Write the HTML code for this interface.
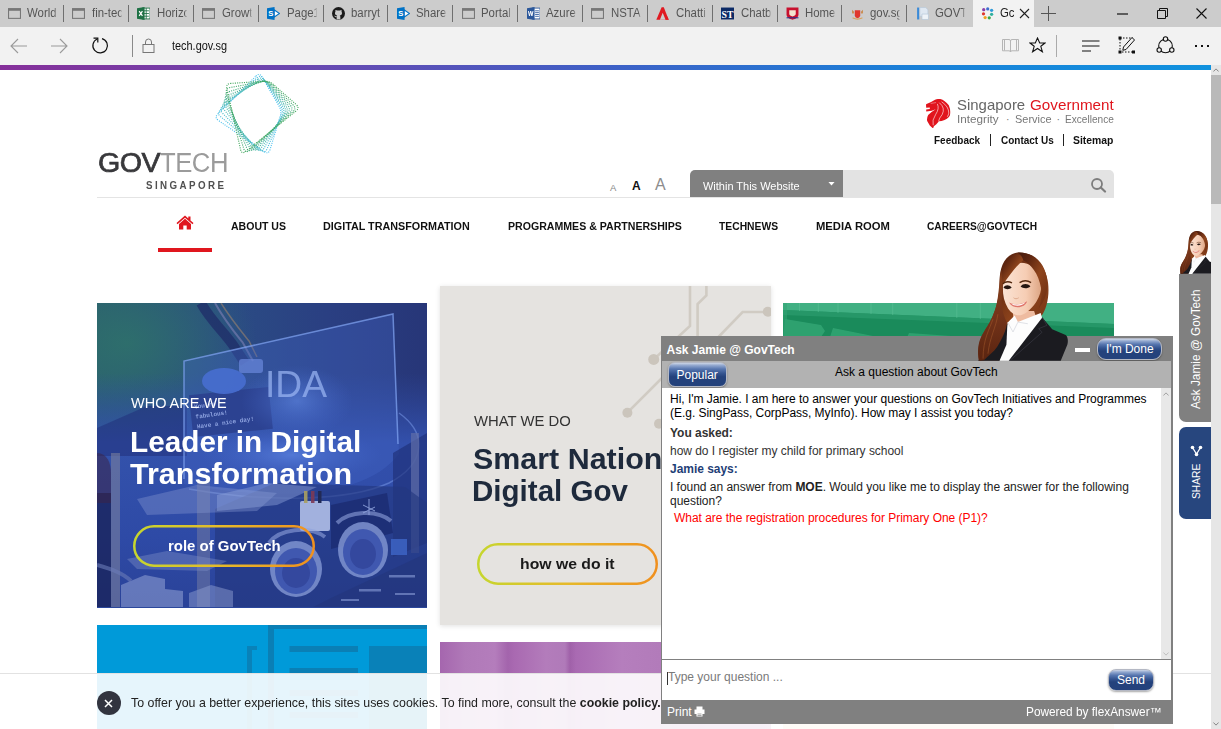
<!DOCTYPE html>
<html lang="en">
<head>
<meta charset="utf-8">
<title>GovTech Singapore</title>
<style>
*{box-sizing:border-box;margin:0;padding:0}
html,body{width:1221px;height:729px;overflow:hidden;background:#fff}
body{position:relative;font-family:"Liberation Sans",sans-serif;color:#000}
.a{position:absolute}
.t{position:absolute;white-space:nowrap;line-height:1;transform-origin:0 50%;transform:scaleX(var(--sx,1))}
.b{font-weight:bold}
/* browser chrome */
#tabbar{left:0;top:0;width:1221px;height:27px;background:#cccccc}
#toolbar{left:0;top:27px;width:1221px;height:37.600px;background:#f2f2f2}
#grad{left:0;top:64.600px;width:1211px;height:5px;background:linear-gradient(90deg,#86309a 0%,#6a48b0 25%,#3e60c6 50%,#1a80d8 75%,#1192de 100%)}
#vscroll{left:1211px;top:64.600px;width:10px;height:664.400px;background:#e6e6e6}
#vthumb{left:1211px;top:75.400px;width:10px;height:128.600px;background:#b9b9b9}
.tab{position:absolute;top:0;height:27px;width:65px}
.tab .sep{position:absolute;left:63px;top:5px;width:1px;height:17px;background:#6f6f6f}
.tab .ic{position:absolute;left:7.500px;top:6.500px;width:13px;height:13px}
.tab .tt{position:absolute;left:27px;top:6px;width:31.500px;transform:scaleX(.95);transform-origin:0 50%;overflow:hidden;white-space:nowrap;font-size:12px;line-height:14px;color:#555;-webkit-mask-image:linear-gradient(90deg,#000 90%,transparent 100%);mask-image:linear-gradient(90deg,#000 90%,transparent 100%)}
.pill{background:linear-gradient(180deg,#cdd6e6 0%,#93a9d0 10%,#5877b0 26%,#33538f 46%,#24427c 60%,#24427c 100%);border:1.5px solid #b4b8c4;box-shadow:0 1px 2px rgba(0,0,0,.35)}
.msg{font-size:12px;line-height:13.8px;white-space:nowrap;letter-spacing:-.03px}
</style>
</head>
<body>
<!-- BROWSER CHROME -->
<div class="a" id="tabbar"></div>
<div class="a" id="toolbar"></div>
<div class="a" id="grad"></div>
<div class="a" id="vscroll"></div>
<div class="a" id="vthumb"></div>
<svg class="a" style="left:1213px;top:68px" width="6" height="4" viewBox="0 0 8 5"><path d="M0.500 4.500 4 1l3.500 3.500" stroke="#666" fill="none"/></svg>
<svg class="a" style="left:1213px;top:722px" width="6" height="4" viewBox="0 0 8 5"><path d="M0.500 0.500 4 4l3.500-3.500" stroke="#666" fill="none"/></svg>
<!-- TABS -->
<div class="tab" style="left:0.0px"><svg class="ic" viewBox="0 0 12 12"><rect x="0.5" y="1.5" width="11" height="9" fill="none" stroke="#777" stroke-width="1"/><rect x="0.5" y="1.5" width="11" height="2" fill="#777"/></svg><span class="tt">World</span><i class="sep"></i></div>
<div class="tab" style="left:64.9px"><svg class="ic" viewBox="0 0 12 12"><rect x="0.5" y="1.5" width="11" height="9" fill="none" stroke="#777" stroke-width="1"/><rect x="0.5" y="1.5" width="11" height="2" fill="#777"/></svg><span class="tt">fin-tec</span><i class="sep"></i></div>
<div class="tab" style="left:129.7px"><svg class="ic" viewBox="0 0 12 12"><rect x="5" y="1" width="7" height="10" fill="#fff" stroke="#1e7145" stroke-width="0.8"/><path d="M6 3.5h5M6 6h5M6 8.5h5M8.5 1v10" stroke="#1e7145" stroke-width="0.8"/><path d="M0 1.2 7 0v12L0 10.8z" fill="#1e7145"/><path d="M2 3.8l3 4.4M5 3.8 2 8.2" stroke="#fff" stroke-width="1.1"/></svg><span class="tt">Horizc</span><i class="sep"></i></div>
<div class="tab" style="left:194.6px"><svg class="ic" viewBox="0 0 12 12"><rect x="0.5" y="1.5" width="11" height="9" fill="none" stroke="#777" stroke-width="1"/><rect x="0.5" y="1.5" width="11" height="2" fill="#777"/></svg><span class="tt">Growt</span><i class="sep"></i></div>
<div class="tab" style="left:259.5px"><svg class="ic" viewBox="0 0 12 12"><path d="M6.5 2.5 11.5 6 6.5 9.5z" fill="#fff" stroke="#0072c6" stroke-width="1"/><path d="M0 1.2 7 0v12L0 10.8z" fill="#0072c6"/><text x="3.4" y="8.6" font-family="Liberation Sans,sans-serif" font-size="7" font-weight="bold" fill="#fff" text-anchor="middle">S</text></svg><span class="tt">Page1</span><i class="sep"></i></div>
<div class="tab" style="left:324.4px"><svg class="ic" viewBox="0 0 12 12"><circle cx="6" cy="6" r="6" fill="#1b1b1b"/><path d="M4.3 11.6V9.3C2.6 9.6 2.4 8.4 1.9 8.1 3 8 3 9 4.3 8.7 4.4 8.2 4.6 8 4.9 7.8 2.6 7.5 2.4 5.2 3.2 4.3 3 3.8 3 3.2 3.3 2.7c.6 0 1.1.3 1.5.6.8-.2 1.6-.2 2.4 0 .4-.3.9-.6 1.5-.6.3.5.3 1.100.1 1.600.8.9.6 3.200-1.700 3.500.4.300.6.700.6 1.400v2.400z" fill="#ccc"/></svg><span class="tt">barryt</span><i class="sep"></i></div>
<div class="tab" style="left:389.2px"><svg class="ic" viewBox="0 0 12 12"><path d="M6.5 2.5 11.5 6 6.5 9.5z" fill="#fff" stroke="#0072c6" stroke-width="1"/><path d="M0 1.2 7 0v12L0 10.8z" fill="#0072c6"/><text x="3.4" y="8.6" font-family="Liberation Sans,sans-serif" font-size="7" font-weight="bold" fill="#fff" text-anchor="middle">S</text></svg><span class="tt">Sharel</span><i class="sep"></i></div>
<div class="tab" style="left:454.1px"><svg class="ic" viewBox="0 0 12 12"><rect x="0.5" y="1.5" width="11" height="9" fill="none" stroke="#777" stroke-width="1"/><rect x="0.5" y="1.5" width="11" height="2" fill="#777"/></svg><span class="tt">Portal</span><i class="sep"></i></div>
<div class="tab" style="left:519.0px"><svg class="ic" viewBox="0 0 12 12"><rect x="5" y="1" width="7" height="10" fill="#fff" stroke="#2b579a" stroke-width="0.8"/><path d="M7.500 3.500h3.500M7.500 5.200h3.500M7.500 6.900h3.500M7.500 8.600h3.500" stroke="#2b579a" stroke-width="0.8"/><path d="M0 1.2 7 0v12L0 10.8z" fill="#2b579a"/><path d="M1.300 3.800l1 4.400 1.100-4.400 1.100 4.400 1-4.400" stroke="#fff" stroke-width="0.9" fill="none"/></svg><span class="tt">Azure</span><i class="sep"></i></div>
<div class="tab" style="left:583.8px"><svg class="ic" viewBox="0 0 12 12"><rect x="0.5" y="1.5" width="11" height="9" fill="none" stroke="#777" stroke-width="1"/><rect x="0.5" y="1.5" width="11" height="2" fill="#777"/></svg><span class="tt">NSTAC</span><i class="sep"></i></div>
<div class="tab" style="left:648.7px"><svg class="ic" viewBox="0 0 12 12"><path d="M0.300 11.700 5.200 0.300h2L11.700 11.700z" fill="#e01a22"/><path d="M3.600 11.700 6.200 5.200 8.800 11.700z" fill="#ccc"/><path d="M8.800 11.700h3L10 8z" fill="#e01a22"/></svg><span class="tt">Chatti</span><i class="sep"></i></div>
<div class="tab" style="left:713.6px"><svg class="ic" viewBox="0 0 12 12"><rect x="0" y="0.500" width="12" height="11" fill="#0c2a66"/><text x="6" y="10" font-family="Liberation Serif,serif" font-size="10" font-weight="bold" fill="#fff" text-anchor="middle" textLength="11" lengthAdjust="spacingAndGlyphs">ST</text></svg><span class="tt">Chatb</span><i class="sep"></i></div>
<div class="tab" style="left:778.4px"><svg class="ic" viewBox="0 0 12 12"><path d="M0.500 0.500h11v6.500c0 2.500-2.500 4.200-5.500 4.700C3 11.200 0.500 9.500 0.500 7z" fill="#c8102e"/><path d="M3 3h6v3.500c0 1-1.500 2-3 2.300C4.500 8.500 3 7.500 3 6.500z" fill="#f3e3d0"/><rect x="0.500" y="9.300" width="11" height="1.200" fill="#26328c" opacity=".8"/></svg><span class="tt">Home</span><i class="sep"></i></div>
<div class="tab" style="left:843.3px"><svg class="ic" viewBox="0 0 12 12"><path d="M1 2.500 3 4.500 2 6.500 1 5.500zM11 2.500 9 4.500 10 6.500 11 5.500z" fill="#c98a4a"/><path d="M3.500 3h5v4.500c0 1.500-1 2.300-2.500 2.800C4.500 9.800 3.500 9 3.500 7.500z" fill="#e0372c"/><path d="M1.500 9.500c3 1.500 6 1.500 9 0v1.200c-3 1.300-6 1.300-9 0z" fill="#d9a05a"/></svg><span class="tt">gov.sg</span><i class="sep"></i></div>
<div class="tab" style="left:908.2px"><svg class="ic" viewBox="0 0 12 12"><path d="M1 0.500h2v11H1z" fill="#3a8ad8"/><path d="M3.500 0.500h5.500l2 2v6h-7.500z" fill="#dfe8f2" stroke="#b5c6d8" stroke-width="0.600"/><path d="M5.500 6.500h6v5h-6z" fill="#eef3f8" stroke="#b5c6d8" stroke-width="0.600"/></svg><span class="tt">GOVT</span></div>
<div class="tab" id="acttab" style="left:973px;width:61px;background:#f2f2f2"><svg class="ic" viewBox="0 0 12 12"><circle cx="2.500" cy="2.500" r="1.500" fill="#8a3fa8"/><circle cx="6.200" cy="1.800" r="1.500" fill="#3f6fd0"/><circle cx="9.800" cy="3" r="1.500" fill="#2f9ad8"/><circle cx="2.300" cy="6.300" r="1.500" fill="#e0362c"/><circle cx="3.800" cy="9.800" r="1.500" fill="#f0a020"/><circle cx="7.600" cy="10" r="1.500" fill="#3aa648"/><circle cx="9.800" cy="6.800" r="1.500" fill="#2fb0a0"/></svg><span class="tt" style="width:16px;color:#222">Gc</span><svg class="a" style="left:46px;top:8px" width="11" height="11" viewBox="0 0 11 11"><path d="M1 1l9 9M10 1l-9 9" stroke="#222" stroke-width="1.100" fill="none"/></svg></div>
<!-- plus / window controls -->
<svg class="a" style="left:1041px;top:6px" width="15" height="15" viewBox="0 0 15 15"><path d="M7.500 0v15M0 7.500h15" stroke="#555" stroke-width="1" fill="none"/></svg>
<svg class="a" style="left:1117px;top:13px" width="11" height="2" viewBox="0 0 11 2"><path d="M0 1h11" stroke="#111" stroke-width="1.200"/></svg>
<svg class="a" style="left:1157px;top:8px" width="11" height="11" viewBox="0 0 11 11"><path d="M0.500 2.500h8v8h-8zM2.500 2.500v-2h8v8h-2" stroke="#111" stroke-width="1" fill="none"/></svg>
<svg class="a" style="left:1196px;top:8px" width="11" height="11" viewBox="0 0 11 11"><path d="M0.500 0.500l10 10M10.500 0.500l-10 10" stroke="#111" stroke-width="1.100" fill="none"/></svg>
<!-- toolbar -->
<svg class="a" style="left:10px;top:38px" width="18" height="16" viewBox="0 0 18 16"><path d="M17 8H1.500M8 1 1 8l7 7" stroke="#9a9a9a" stroke-width="1.100" fill="none"/></svg>
<svg class="a" style="left:50px;top:38px" width="18" height="16" viewBox="0 0 18 16"><path d="M1 8h15.500M10 1l7 7-7 7" stroke="#9a9a9a" stroke-width="1.100" fill="none"/></svg>
<svg class="a" style="left:91px;top:36px" width="18" height="18" viewBox="0 0 18 18"><path d="M6.200 3A7.300 7.300 0 1 0 11 2.600" stroke="#111" stroke-width="1.200" fill="none"/><path d="M2.500 2.200h4.300v4.300" stroke="#111" stroke-width="1.200" fill="none"/></svg>
<div class="a" style="left:132px;top:35px;width:1px;height:22px;background:#8a8a8a"></div>
<svg class="a" style="left:142px;top:38px" width="13" height="15" viewBox="0 0 13 15"><rect x="1" y="6.500" width="11" height="8" fill="none" stroke="#777" stroke-width="1"/><path d="M3.500 6.500V4a3 3 0 0 1 6 0v2.500" fill="none" stroke="#777" stroke-width="1"/></svg>
<span class="t" id="url" style="left:172px;top:40px;font-size:12px;color:#111;--sx:0.909">tech.gov.sg</span>
<svg class="a" style="left:1002px;top:38px" width="17" height="15" viewBox="0 0 17 15"><path d="M0.500 1.500h6.500q1.500 0 1.500 1.500v11q0-1.200-1.500-1.200H0.500zM16.500 1.500h-6.500q-1.500 0-1.500 1.500v11q0-1.200 1.500-1.200h6.500z" stroke="#b5b5b5" stroke-width="1" fill="none"/><path d="M2.500 1.500v11M14.500 1.500v11" stroke="#b5b5b5" stroke-width="1"/></svg>
<svg class="a" style="left:1029px;top:37px" width="17" height="16" viewBox="0 0 17 16"><path d="M8.500 1 10.700 6h5.300L11.800 9.300l1.600 5.500L8.500 11.500 3.600 14.800l1.600-5.500L1 6h5.300z" stroke="#111" stroke-width="1.100" fill="none" stroke-linejoin="miter"/></svg>
<div class="a" style="left:1056px;top:35px;width:1px;height:22px;background:#aaa"></div>
<svg class="a" style="left:1082px;top:40px" width="18" height="12" viewBox="0 0 18 12"><path d="M0 1h17.500M0 6h17.500M0 11h9" stroke="#111" stroke-width="1.100"/></svg>
<svg class="a" style="left:1118px;top:36px" width="18" height="18" viewBox="0 0 18 18"><path d="M2 3v13h13" stroke="#111" stroke-width="1" fill="none" stroke-dasharray="1.500 1.500"/><path d="M2 2h13" stroke="#111" stroke-width="1" stroke-dasharray="1.500 1.500"/><rect x="0.500" y="0.500" width="3" height="3" fill="#111"/><rect x="0.500" y="14.500" width="3" height="3" fill="#111"/><rect x="14" y="14.500" width="3" height="3" fill="#111"/><path d="M14 1.500l2.500 2.500-8.500 9.500-3.200.8.700-3.300z" fill="#f2f2f2" stroke="#111" stroke-width="1"/></svg>
<svg class="a" style="left:1156px;top:36px" width="19" height="18" viewBox="0 0 19 18"><circle cx="9.500" cy="10" r="6.800" fill="none" stroke="#111" stroke-width="1.100"/><circle cx="9.500" cy="3" r="2.200" fill="#f2f2f2" stroke="#111" stroke-width="1.100"/><circle cx="3.200" cy="14" r="2.200" fill="#f2f2f2" stroke="#111" stroke-width="1.100"/><circle cx="15.800" cy="14" r="2.200" fill="#f2f2f2" stroke="#111" stroke-width="1.100"/></svg>
<div class="a" style="left:1195px;top:45px;width:2px;height:2px;background:#111;box-shadow:6px 0 #111,12px 0 #111"></div>
<!-- PAGE -->
<!-- HEADER -->
<span class="t" id="lg1" style="left:97.500px;top:149.500px;font-size:27px;color:#38383b;letter-spacing:-.5px;-webkit-text-stroke:.7px #38383b;--sx:1.06">GOV</span>
<span class="t" id="lg2" style="left:160px;top:149.500px;font-size:27px;color:#9b9b9b;letter-spacing:-.5px;--sx:0.951">TECH</span>
<span class="t" id="lg3" style="left:146px;top:181px;font-size:10px;font-weight:bold;color:#505050;letter-spacing:2.500px;--sx:0.976">SINGAPORE</span>
<svg class="a" id="swirl" style="left:212px;top:68px" width="90" height="90" viewBox="-43.500 -43.500 87 87"><g fill="none" stroke-width="1.100" stroke-dasharray="1 1.200" stroke-linejoin="round"><path d="M-1.1 -35.6Q2.5 -39.1 5.0 -34.8L21.5 -6.3Q24.0 -2.0 22.5 2.8L12.6 35.4Q11.1 40.2 7.0 37.4L-37.3 7.2Q-41.4 4.4 -37.8 0.9z" stroke="rgb(80, 195, 238)"/><path d="M-0.2 -33.9Q3.6 -37.2 6.3 -33.0L22.9 -6.5Q25.6 -2.3 23.6 2.3L9.7 34.7Q7.7 39.3 3.8 36.1L-35.2 3.5Q-39.1 0.3 -35.3 -3.0z" stroke="rgb(78, 191, 220)"/><path d="M0.7 -32.5Q4.7 -35.5 7.5 -31.4L24.3 -6.7Q27.2 -2.6 24.8 1.8L6.8 34.1Q4.4 38.5 0.9 34.9L-33.5 -0.0Q-37.0 -3.6 -33.0 -6.7z" stroke="rgb(76, 188, 201)"/><path d="M1.5 -31.3Q5.7 -34.1 8.7 -30.0L25.9 -6.9Q28.9 -2.9 26.1 1.2L4.1 33.8Q1.3 38.0 -1.8 34.1L-32.0 -3.5Q-35.1 -7.4 -30.9 -10.2z" stroke="rgb(73, 184, 182)"/><path d="M2.4 -30.6Q6.8 -32.9 10.0 -29.1L27.6 -7.1Q30.8 -3.2 27.7 0.7L1.4 33.9Q-1.7 37.8 -4.5 33.6L-30.9 -7.0Q-33.7 -11.2 -29.2 -13.6z" stroke="rgb(71, 180, 164)"/><path d="M3.4 -30.2Q8.0 -32.2 11.3 -28.4L29.7 -7.4Q33.0 -3.6 29.6 0.1L-1.4 34.3Q-4.8 38.0 -7.1 33.5L-30.2 -10.7Q-32.5 -15.1 -27.9 -17.1z" stroke="rgb(69, 176, 146)"/><path d="M4.4 -30.2Q9.2 -31.6 12.7 -28.0L32.1 -7.6Q35.5 -4.0 32.0 -0.5L-4.4 35.0Q-8.0 38.5 -9.9 33.9L-29.7 -14.6Q-31.6 -19.3 -26.8 -20.7z" stroke="rgb(66, 172, 127)"/><path d="M5.6 -30.4Q10.6 -31.3 14.2 -27.8L34.8 -7.9Q38.4 -4.4 34.7 -1.1L-7.5 36.0Q-11.3 39.3 -12.8 34.5L-29.4 -18.9Q-30.9 -23.7 -26.0 -24.6z" stroke="rgb(64, 169, 108)"/><path d="M7.0 -30.7Q12.0 -31.0 15.7 -27.7L37.8 -8.2Q41.5 -4.9 37.6 -1.8L-10.9 37.1Q-14.8 40.2 -15.9 35.3L-29.1 -23.4Q-30.2 -28.3 -25.2 -28.6z" stroke="rgb(62, 165, 90)"/></g></svg>
<svg class="a" id="lion" style="left:926px;top:98.900px" width="24.900" height="29.500" viewBox="92 105 380 450"><path d="M100 180 170 150 230 115Q270 100 310 106 380 125 440 200 475 280 455 360 430 410 330 440L290 446 250 490 212 520 200 555 150 510 110 440Q100 400 125 350 160 310 240 262L180 285 95 295 95 265 150 256 150 236 95 240 92 190z" fill="#e1141d"/><g stroke="#fff" stroke-width="9" fill="none" stroke-linecap="round"><path d="M268 185Q300 250 240 340 180 430 200 500"/><path d="M300 165Q390 240 340 340 290 400 285 440"/><path d="M335 150Q440 220 440 320 435 350 420 372"/><path d="M170 172 240 160" stroke-width="6"/></g></svg>
<span class="t" id="sg1" style="left:957px;top:98px;font-size:14.300px;color:#666;--sx:1.046">Singapore</span>
<span class="t" id="sg2" style="left:1030px;top:98px;font-size:14.300px;color:#e0161e;--sx:1.065">Government</span>
<span class="t" id="sg3a" style="left:957px;top:114px;font-size:10.500px;color:#777;--sx:1.114">Integrity</span><span class="t" id="sg3b" style="left:1006px;top:114px;font-size:10.500px;color:#777">·</span><span class="t" id="sg3c" style="left:1014.600px;top:114px;font-size:10.500px;color:#777;--sx:1.042">Service</span><span class="t" id="sg3d" style="left:1056.400px;top:114px;font-size:10.500px;color:#777">·</span><span class="t" id="sg3e" style="left:1065.300px;top:114px;font-size:10.500px;color:#777;--sx:0.961">Excellence</span>
<span class="t b" id="fb1" style="left:934px;top:135px;font-size:11px;color:#111;--sx:0.908">Feedback</span>
<div class="a" style="left:990px;top:134px;width:1px;height:12px;background:#222"></div>
<span class="t b" id="fb2" style="left:1001px;top:135px;font-size:11px;color:#111;--sx:0.908">Contact Us</span>
<div class="a" style="left:1063px;top:134px;width:1px;height:12px;background:#222"></div>
<span class="t b" id="fb3" style="left:1073px;top:135px;font-size:11px;color:#111;--sx:0.946">Sitemap</span>
<span class="t" id="fa1" style="left:610px;top:182.500px;font-size:9.500px;color:#858585">A</span>
<span class="t b" id="fa2" style="left:632px;top:180px;font-size:12px;color:#111">A</span>
<span class="t" id="fa3" style="left:655px;top:177px;font-size:16px;color:#8c8c8c">A</span>
<div class="a" style="left:690px;top:169.800px;width:153px;height:28px;background:#808080;border-radius:5px 0 0 0"></div>
<div class="a" style="left:843px;top:169.800px;width:271px;height:28px;background:#e3e3e3;border-radius:0 5px 0 0"></div>
<span class="t" id="wtw" style="left:703px;top:181.300px;font-size:11px;color:#fff;--sx:0.998">Within This Website</span>
<svg class="a" style="left:827.700px;top:182px" width="7" height="3.800" viewBox="0 0 8 5"><path d="M0 0h8L4 4.500z" fill="#fff"/></svg>
<svg class="a" style="left:1090px;top:177px" width="17" height="16" viewBox="0 0 17 16"><circle cx="7" cy="7" r="5" fill="none" stroke="#7d7d7d" stroke-width="1.800"/><path d="M10.800 10.500 15 14.500" stroke="#7d7d7d" stroke-width="2.200" stroke-linecap="round"/></svg>
<div class="a" style="left:97px;top:197.300px;width:1017px;height:1px;background:#e4e4e4"></div>
<!-- NAV -->
<svg class="a" style="left:176px;top:215px" width="18" height="15" viewBox="0 0 18 15"><path d="M9 0.500 0.500 8l1 1.200L9 2.800l7.500 6.400 1-1.200-3-2.600V1.500h-2.200v2z" fill="#e0161e"/><path d="M9 3.800 3 9v5.500h4.300V10.500h3.400v4H15V9z" fill="#e0161e"/></svg>
<div class="a" style="left:158px;top:247.500px;width:54px;height:4.500px;background:#e0161e"></div>
<span class="t b" id="n1" style="left:231px;top:220px;font-size:11.600px;color:#111;--sx:0.908">ABOUT US</span>
<span class="t b" id="n2" style="left:323.400px;top:220px;font-size:11.600px;color:#111;--sx:0.93">DIGITAL TRANSFORMATION</span>
<span class="t b" id="n3" style="left:508.300px;top:220px;font-size:11.600px;color:#111;--sx:0.913">PROGRAMMES &amp; PARTNERSHIPS</span>
<span class="t b" id="n4" style="left:719.400px;top:220px;font-size:11.600px;color:#111;--sx:0.891">TECHNEWS</span>
<span class="t b" id="n5" style="left:816.100px;top:220px;font-size:11.600px;color:#111;--sx:0.97">MEDIA ROOM</span>
<span class="t b" id="n6" style="left:927.200px;top:220px;font-size:11.600px;color:#111;--sx:0.878">CAREERS@GOVTECH</span>
<!-- CARD 1 -->
<div class="a" id="card1" style="left:97px;top:303px;width:330.200px;height:304.600px;overflow:hidden;background:#2b479c">
<svg class="a" id="c1bg" style="left:0;top:0;filter:blur(.6px)" width="330" height="304" viewBox="0 0 330 304">
<defs>
<linearGradient id="c1a" x1="0" y1="0" x2="1" y2="0"><stop offset="0" stop-color="#2b5a72"/><stop offset=".4" stop-color="#2b4c84"/><stop offset=".7" stop-color="#2a3f82"/><stop offset="1" stop-color="#273678"/></linearGradient>
<linearGradient id="c1b" x1="0" y1="0" x2="0" y2="1"><stop offset="0" stop-color="#2f4ca6" stop-opacity="0"/><stop offset=".3" stop-color="#3452b0" stop-opacity=".92"/><stop offset=".7" stop-color="#2e4aa6"/><stop offset="1" stop-color="#2a4298"/></linearGradient>
<radialGradient id="c1c" cx=".5" cy=".5" r=".5"><stop offset="0" stop-color="#6a94f0" stop-opacity=".9"/><stop offset="1" stop-color="#4a70d8" stop-opacity="0"/></radialGradient>
<radialGradient id="c1g" cx=".5" cy=".5" r=".5"><stop offset="0" stop-color="#2f7868" stop-opacity=".7"/><stop offset="1" stop-color="#2f7868" stop-opacity="0"/></radialGradient>
</defs>
<rect width="330" height="304" fill="url(#c1a)"/>
<ellipse cx="30" cy="40" rx="130" ry="100" fill="url(#c1g)"/>
<rect y="70" width="330" height="234" fill="url(#c1b)"/>
<path d="M104 0c10 18 24 30 32 42l12 18" stroke="#1f2c68" stroke-width="10" fill="none" opacity=".75"/>
<path d="M118 0c10 18 20 30 28 40l10 18" stroke="#6a74a8" stroke-width="2" fill="none" opacity=".8"/>
<path d="M124 0c10 16 20 28 28 38l8 16" stroke="#8a7a70" stroke-width="1.500" fill="none" opacity=".7"/>
<path d="M0 125l50-22h40v50H0z" fill="#20307a" opacity=".55"/>
<rect x="94" y="88" width="80" height="42" fill="#1e2c70" opacity=".85" transform="rotate(-6 134 110)"/>
<ellipse cx="127" cy="78" rx="22" ry="13" fill="#4a72d6" opacity=".9"/>
<rect x="142" y="56" width="24" height="14" rx="3" fill="#7f9ae8" opacity=".7"/>
<path d="M87 58 296 11l6 140c-30 40-110 50-215 30z" fill="#4466c6" opacity=".34"/>
<path d="M87 176V58L296 11l5 130" stroke="#7ea0ee" stroke-width="1.500" fill="none" opacity=".75"/>
<path d="M302 110c28 20 28 50-10 70-40 18-120 20-200 6" stroke="#6f90e0" stroke-width="1.500" fill="none" opacity=".6"/>
<ellipse cx="200" cy="98" rx="56" ry="36" fill="url(#c1c)" opacity=".55"/>
<ellipse cx="195" cy="152" rx="90" ry="26" fill="url(#c1c)" opacity=".6"/>
<text x="168" y="94" font-family="Liberation Sans,sans-serif" font-size="36" fill="#9db8f5" opacity=".7" textLength="62" lengthAdjust="spacingAndGlyphs">IDA</text>
<g font-family="Liberation Mono,monospace" font-size="6" font-weight="bold" fill="#9fb4ee" opacity=".85" transform="rotate(-8 96 110)"><text x="98" y="106">You're</text><text x="98" y="116">fabulous!</text><text x="98" y="126">Have a nice day!</text></g>
<path d="M296 150l34-20v110l-34 14z" fill="#1f2f78" opacity=".65"/>
<rect x="14" y="150" width="9" height="154" fill="#7a7f9c" opacity=".6"/>
<rect x="100" y="178" width="13" height="126" fill="#6a74a2" opacity=".6"/>
<rect x="314" y="130" width="8" height="120" fill="#5f6ea8" opacity=".7"/>
<path d="M0 190h14v114H0z" fill="#1a245c" opacity=".8"/>
<path d="M0 150c10 0 14 10 14 20v30H0z" fill="#3a2448" opacity=".55"/>
<path d="M118 206l60-26 130 4 22 16v104H118z" fill="#243880" opacity=".65"/>
<path d="M40 196l60-14 80 8-20 18-110 4z" fill="#8497d0" opacity=".4"/>
<path d="M120 192l50-12 50 4-40 18-60 6z" fill="#8fa2da" opacity=".45"/>
<rect x="203" y="198" width="30" height="30" rx="2" fill="#b9c6ec" opacity=".85"/>
<rect x="207" y="188" width="3.500" height="12" fill="#a9a060" opacity=".9"/><rect x="214" y="188" width="3.500" height="12" fill="#7d3a55" opacity=".9"/><rect x="221" y="188" width="3.500" height="12" fill="#222a55"/>
<path d="M234 202l56-12 6 40-62 16z" fill="#1d2d74" opacity=".9"/>
<path d="M272 196v16M266 202l12 6M266 210l12-6" stroke="#9fb2ea" stroke-width="1" opacity=".8"/>
<ellipse cx="199" cy="266" rx="26" ry="28" fill="#7f93d0" opacity=".85"/><ellipse cx="199" cy="268" rx="21" ry="23" fill="#4058b0"/><ellipse cx="199" cy="270" rx="14" ry="15" fill="#34489e"/>
<ellipse cx="266" cy="247" rx="25" ry="28" fill="#7f93d0" opacity=".85"/><ellipse cx="266" cy="249" rx="20" ry="23" fill="#4058b0"/><ellipse cx="266" cy="251" rx="13" ry="15" fill="#34489e"/>
<path d="M172 240c10-14 40-18 56-6" stroke="#8fa2dc" stroke-width="4" fill="none" opacity=".6"/>
<path d="M240 220c12-12 40-14 54-2" stroke="#8fa2dc" stroke-width="4" fill="none" opacity=".6"/>
<path d="M24 282l24-10 20 4v10l18 2v16H24z" fill="#8b9bd0" opacity=".6"/><path d="M92 290l22-8 22 6v16H92z" fill="#8b9bd0" opacity=".5"/><path d="M30 256l40-8 60 10-20 10-70-2z" fill="#7f90c8" opacity=".4"/>
<path d="M0 262c14 4 26 8 34 16" stroke="#6a7cb8" stroke-width="4" fill="none" opacity=".6"/>
<path d="M232 296l98-46v54H216z" fill="#24367e" opacity=".7"/>
<g fill="#9fb2ea" opacity=".5"><rect x="262" y="286" width="22" height="2.500"/><rect x="292" y="272" width="26" height="2.500"/><rect x="298" y="290" width="20" height="2"/><rect x="244" y="296" width="18" height="2"/></g>
<rect x="294" y="236" width="16" height="16" fill="#3f66c8" opacity=".8"/>
</svg>
<span class="t" id="c1t1" style="left:34px;top:93px;font-size:14.3px;color:#fff;--sx:1.013">WHO ARE WE</span>
<span class="t b" id="c1t2" style="left:32.5px;top:124.5px;font-size:29px;color:#fff;--sx:1.025">Leader in Digital</span>
<span class="t b" id="c1t3" style="left:33px;top:156.5px;font-size:29px;color:#fff;--sx:1.052">Transformation</span>
<div class="a btn" style="left:36px;top:222px;width:182px;height:42px"><svg class="a" style="left:0;top:0" width="182" height="42" viewBox="0 0 182 42"><defs><linearGradient id="bg1" x1="0" y1="0" x2="1" y2="0"><stop offset="0" stop-color="#c6d62e"/><stop offset=".5" stop-color="#e6b92a"/><stop offset="1" stop-color="#f0901e"/></linearGradient></defs><rect x="1.250" y="1.250" width="179.5" height="39.500" rx="19.750" fill="none" stroke="url(#bg1)" stroke-width="2.500"/></svg><span class="t b" id="c1t4" style="left:35px;top:14px;font-size:14.5px;color:#fff;--sx:1.031">role of GovTech</span></div>
</div>
<!-- CARD 2 -->
<div class="a" id="card2" style="left:440.200px;top:286px;width:330.600px;height:338.800px;overflow:hidden;background:#e5e3e0;box-shadow:0 1px 5px rgba(0,0,0,.12)">
<svg class="a" style="left:0;top:0" width="331" height="338" viewBox="0 0 331 338"><g stroke="#d0cbc3" stroke-width="2.600" fill="none"><path d="M250 0V40L213.700 73.400"/><path d="M266.400 0V9.400L257.600 18V60"/><path d="M328 26H302.600L260 70"/><path d="M187.400 126.700 240 74"/></g><g fill="#cbc5bc"><circle cx="327.800" cy="25.800" r="5"/><circle cx="213.700" cy="73.400" r="5.500"/><circle cx="187.400" cy="126.700" r="5"/><circle cx="219" cy="137.700" r="5"/></g></svg>
<span class="t" id="c2t1" style="left:34px;top:128px;font-size:14.3px;color:#333;--sx:1.039">WHAT WE DO</span>
<span class="t b" id="c2t2" style="left:33px;top:159px;font-size:29px;color:#1e2a3c;--sx:1.049">Smart Nation &amp;</span>
<span class="t b" id="c2t3" style="left:32px;top:191px;font-size:29px;color:#1e2a3c;--sx:1.019">Digital Gov</span>
<div class="a btn" style="left:37px;top:257px;width:181px;height:42px"><svg class="a" style="left:0;top:0" width="181" height="42" viewBox="0 0 181 42"><defs><linearGradient id="bg2" x1="0" y1="0" x2="1" y2="0"><stop offset="0" stop-color="#c6d62e"/><stop offset=".5" stop-color="#e6b92a"/><stop offset="1" stop-color="#f0901e"/></linearGradient></defs><rect x="1.250" y="1.250" width="178.5" height="39.500" rx="19.750" fill="none" stroke="url(#bg2)" stroke-width="2.500"/></svg><span class="t b" id="c2t4" style="left:43px;top:14px;font-size:14.5px;color:#1a1a1a;--sx:1.087">how we do it</span></div>
</div>
<!-- CARD 3 -->
<div class="a" id="card3" style="left:783px;top:303px;width:331px;height:304px;overflow:hidden;background:#1a8b5b">
<svg class="a" style="left:0;top:0;filter:blur(.5px)" width="331" height="60" viewBox="0 0 331 60"><path d="M0 0h331v21L0 7z" fill="#41b083"/><path d="M0 7l331 14v4L0 12z" fill="#2c9c6d" opacity=".7"/><g stroke="#5cc096" stroke-width="1" opacity=".55"><path d="M16.500 0v8M35.300 0v9M55 0v10M88 0v11M109.700 0v12M173.800 0v15M197.300 0v16M243 0v18"/></g><g fill="#33a574" opacity=".85"><path d="M2 16l36 6 4 6-8 12H0z"/><path d="M50 25l40 8 6 10H44z"/><path d="M126 30l56 4 14 10H120z"/><path d="M0 0h4v60H0z" opacity=".6"/></g></svg>
</div>
<!-- BOTTOM CARDS -->
<div class="a" id="card4" style="left:97px;top:625.400px;width:330.300px;height:104px;overflow:hidden;background:#009ad9">
<svg class="a" style="left:0;top:0" width="331" height="104" viewBox="0 0 331 104"><g fill="#0a7fb5"><path d="M171 0h160v4H171z"/><path d="M171 0h6v104h-6z"/><path d="M150 21h10v4h-5v79h-5z" opacity=".9"/><path d="M192.500 21H261v6h-68.500zM192.500 43H261v6h-68.500zM192.500 65H261v6h-68.500zM192.500 87H261v6h-68.500z"/><path d="M272 21h59v83h-59z" opacity=".92"/></g></svg>
</div>
<div class="a" id="card5" style="left:440.200px;top:642.200px;width:331px;height:87px;overflow:hidden;background:linear-gradient(90deg,#a566ae 0,#b079b8 25px,#b47dbc 55px,#a364ac 68px,#a969b1 74px,#b37cbb 106px,#b07ab9 125px,#a061a9 130px,#a96ab2 136px,#b57ebd 182px,#b27bba 220px,#aa6cb3 260px,#b277ba 331px)"></div>
<div class="a" id="card6" style="left:783px;top:724px;width:331px;height:5px;background:#f6d6a8"></div>
<!-- COOKIE BAR -->
<div class="a" id="cookie" style="left:0;top:673px;width:1211px;height:56px;background:rgba(255,255,255,.9);border-top:1px solid #e2e2e2">
<div class="a" style="left:96.500px;top:17px;width:24px;height:24px;border-radius:50%;background:#32343f"><svg class="a" style="left:7.500px;top:7.500px" width="9" height="9" viewBox="0 0 9 9"><path d="M1 1l7 7M8 1 1 8" stroke="#fff" stroke-width="1.500"/></svg></div>
<span class="t" id="ck1" style="left:131px;top:21.500px;font-size:13px;color:#222;--sx:0.952">To offer you a better experience, this sites uses cookies. To find more, consult the <b>cookie policy.</b></span>
</div>
<!-- SIDE TABS -->
<div class="a" id="lady2" style="left:1173px;top:228px;width:37.800px;height:46px;overflow:hidden"><svg class="a" style="left:0;top:0" width="47.500" height="46" viewBox="0 0 729 704"><defs><linearGradient id="hr2" x1="0" y1="0" x2="1" y2="1"><stop offset="0" stop-color="#431a0c"/><stop offset=".25" stop-color="#5e2610"/><stop offset=".55" stop-color="#8e441c"/><stop offset="1" stop-color="#6a2c12"/></linearGradient><linearGradient id="hs2" x1="0" y1="0" x2="0" y2="1"><stop offset="0" stop-color="#8a421c"/><stop offset=".5" stop-color="#74341a"/><stop offset="1" stop-color="#5a2410"/></linearGradient><linearGradient id="sk2" x1="0" y1="0" x2="1" y2="0"><stop offset="0" stop-color="#fbe3d4"/><stop offset=".6" stop-color="#f6cdb4"/><stop offset="1" stop-color="#dca482"/></linearGradient></defs>
<path d="M350 45C270 60 240 130 240 230c0 90-20 160-60 240-40 70-80 110-65 230h120l60-230 200-40c30-40 50-120 40-200C520 120 450 40 350 45z" fill="url(#hr2)"/>
<path d="M320 400h130l20 60-140 40z" fill="#eebba0"/>
<path d="M262 225c-5 60 0 110 30 160 20 30 45 42 65 42 30 0 70-30 105-80 30-45 40-100 30-150-30-70-100-110-170-80-40 15-55 60-60 108z" fill="url(#sk2)"/>
<path d="M385 92C340 125 300 185 258 245 246 200 245 120 300 72 330 50 372 46 385 92z" fill="url(#hr2)"/>
<path d="M385 92C430 118 478 170 492 260 498 300 494 345 478 385 522 332 542 262 526 190 510 110 450 40 350 45 372 58 381 76 385 92z" fill="url(#hr2)"/>
<path d="M264 258c12-18 34-18 50 0-14 13-36 13-50 0zM368 252c14-20 42-20 60-2-16 16-44 16-60 2z" fill="#241611"/>
<path d="M258 236c16-14 38-16 58-6M362 228c22-14 48-14 70 0" stroke="#55290f" stroke-width="8" fill="none"/>
<path d="M325 320c8 8 22 8 32 0" stroke="#d9a386" stroke-width="5" fill="none"/>
<path d="M298 349c32 16 76 14 110-7-12 42-84 52-110 7z" fill="#e0766c"/><path d="M311 355c28 10 58 8 86-7-14 23-66 29-86 7z" fill="#fff"/>
<path d="M290 470l42-42 20 40 138-55 12 40-200 250h-62z" fill="#fdfdfd"/>
<path d="M352 468l-30 60-32-58M352 468l60 10" stroke="#d9dce2" stroke-width="5" fill="none"/>
<path d="M500 440l60 72 82 34c14 10 16 40 10 60l-40 97H296z" fill="#1b1b20"/>
<path d="M500 440l28 48-50 20 20 22-196 173" stroke="#3a3a44" stroke-width="4" fill="none"/>
<path d="M252 520l36-44-6 130-42 97H110z" fill="#1b1b20"/>
<path d="M250 150c-20 120-10 220-70 320-40 70-85 110-65 233l30-3c30-30 60-50 80-80 30-50 60-110 60-150-30-60-40-120-25-190z" fill="url(#hs2)"/>
<path d="M200 450c-20 60-60 120-60 240M230 420c-10 80-50 140-60 240" stroke="#a85c2c" stroke-width="5" fill="none" opacity=".6"/></svg></div>
<div class="a" style="left:1178.900px;top:273.800px;width:32.100px;height:148.500px;background:#808080;border-radius:0 0 0 7px"></div>
<span class="a" id="sd1" style="left:1188px;top:408.600px;white-space:nowrap;font-size:13px;line-height:16px;color:#fff;transform-origin:0 0;transform:rotate(-90deg) scaleX(var(--sx,1));--sx:0.908">Ask Jamie @ GovTech</span>
<div class="a" style="left:1178.900px;top:426.900px;width:32.100px;height:92.400px;background:#27467e;border-radius:7px 0 0 7px"></div>
<span class="a" id="sd2" style="left:1188px;top:499px;white-space:nowrap;font-size:11.500px;line-height:16px;color:#fff;transform-origin:0 0;transform:rotate(-90deg) scaleX(var(--sx,1));--sx:0.891">SHARE</span>
<svg class="a" style="left:1190px;top:445px" width="13" height="13" viewBox="0 0 13 13"><path d="M2.500 2.500 9 6.500 2.500 10.500" stroke="#fff" stroke-width="1.300" fill="none" transform="rotate(90 6.500 6.500)"/><circle cx="2.500" cy="2.500" r="1.800" fill="#fff" transform="rotate(90 6.500 6.500)"/><circle cx="2.500" cy="10.500" r="1.800" fill="#fff" transform="rotate(90 6.500 6.500)"/><circle cx="9.500" cy="6.500" r="1.800" fill="#fff" transform="rotate(90 6.500 6.500)"/></svg>
<!-- CHAT -->
<div class="a" id="chat" style="left:660.800px;top:336px;width:512.200px;height:388.400px;background:#808080"></div>
<span class="t b" id="ch0" style="left:666.500px;top:344px;font-size:12px;color:#fff">Ask Jamie @ GovTech</span>
<svg class="a" id="lady" style="left:960px;top:245px" width="120" height="116" viewBox="0 0 729 704"><defs><linearGradient id="hr" x1="0" y1="0" x2="1" y2="1"><stop offset="0" stop-color="#431a0c"/><stop offset=".25" stop-color="#5e2610"/><stop offset=".55" stop-color="#8e441c"/><stop offset="1" stop-color="#6a2c12"/></linearGradient><linearGradient id="hs" x1="0" y1="0" x2="0" y2="1"><stop offset="0" stop-color="#8a421c"/><stop offset=".5" stop-color="#74341a"/><stop offset="1" stop-color="#5a2410"/></linearGradient><linearGradient id="sk" x1="0" y1="0" x2="1" y2="0"><stop offset="0" stop-color="#fbe3d4"/><stop offset=".6" stop-color="#f6cdb4"/><stop offset="1" stop-color="#dca482"/></linearGradient></defs>
<path d="M350 45C270 60 240 130 240 230c0 90-20 160-60 240-40 70-80 110-65 230h120l60-230 200-40c30-40 50-120 40-200C520 120 450 40 350 45z" fill="url(#hr)"/>
<path d="M320 400h130l20 60-140 40z" fill="#eebba0"/>
<path d="M262 225c-5 60 0 110 30 160 20 30 45 42 65 42 30 0 70-30 105-80 30-45 40-100 30-150-30-70-100-110-170-80-40 15-55 60-60 108z" fill="url(#sk)"/>
<path d="M385 92C340 125 300 185 258 245 246 200 245 120 300 72 330 50 372 46 385 92z" fill="url(#hr)"/>
<path d="M385 92C430 118 478 170 492 260 498 300 494 345 478 385 522 332 542 262 526 190 510 110 450 40 350 45 372 58 381 76 385 92z" fill="url(#hr)"/>
<path d="M264 258c12-18 34-18 50 0-14 13-36 13-50 0zM368 252c14-20 42-20 60-2-16 16-44 16-60 2z" fill="#241611"/>
<path d="M258 236c16-14 38-16 58-6M362 228c22-14 48-14 70 0" stroke="#55290f" stroke-width="8" fill="none"/>
<path d="M325 320c8 8 22 8 32 0" stroke="#d9a386" stroke-width="5" fill="none"/>
<path d="M298 349c32 16 76 14 110-7-12 42-84 52-110 7z" fill="#e0766c"/><path d="M311 355c28 10 58 8 86-7-14 23-66 29-86 7z" fill="#fff"/>
<path d="M290 470l42-42 20 40 138-55 12 40-200 250h-62z" fill="#fdfdfd"/>
<path d="M352 468l-30 60-32-58M352 468l60 10" stroke="#d9dce2" stroke-width="5" fill="none"/>
<path d="M500 440l60 72 82 34c14 10 16 40 10 60l-40 97H296z" fill="#1b1b20"/>
<path d="M500 440l28 48-50 20 20 22-196 173" stroke="#3a3a44" stroke-width="4" fill="none"/>
<path d="M252 520l36-44-6 130-42 97H110z" fill="#1b1b20"/>
<path d="M250 150c-20 120-10 220-70 320-40 70-85 110-65 233l30-3c30-30 60-50 80-80 30-50 60-110 60-150-30-60-40-120-25-190z" fill="url(#hs)"/>
<path d="M200 450c-20 60-60 120-60 240M230 420c-10 80-50 140-60 240" stroke="#a85c2c" stroke-width="5" fill="none" opacity=".6"/></svg>
<div class="a" style="left:1074.700px;top:347.700px;width:15.800px;height:4.400px;background:#fff"></div>
<div class="a pill" style="left:1097px;top:338px;width:65px;height:21.500px;border-radius:9px"><span class="t" id="ch1" style="left:8px;top:3.500px;font-size:12px;color:#fff">I'm Done</span></div>
<div class="a" style="left:662.200px;top:360.800px;width:508.900px;height:27.500px;background:#b2b2b2"></div>
<div class="a pill" style="left:667.500px;top:362px;width:59px;height:25px;border-radius:7px"><span class="t" id="ch2" style="left:8px;top:5.500px;font-size:12px;color:#fff">Popular</span></div>
<span class="t" id="ch3" style="left:835px;top:366px;font-size:12px;color:#000">Ask a question about GovTech</span>
<div class="a" style="left:662.200px;top:388.200px;width:508.900px;height:270.900px;background:#fff"></div>
<div class="a" style="left:1161.400px;top:388.200px;width:9.700px;height:270.900px;background:#e8e8e8"></div>
<svg class="a" style="left:1163px;top:391.500px" width="6" height="4" viewBox="0 0 8 5"><path d="M0.500 4.500 4 1l3.500 3.500" stroke="#888" stroke-width="1" fill="none"/></svg>
<svg class="a" style="left:1163px;top:651.500px" width="6" height="4" viewBox="0 0 8 5"><path d="M0.500 0.500 4 4l3.500-3.500" stroke="#b0b0b0" stroke-width="1" fill="none"/></svg>
<div class="a msg" style="left:670px;top:393px;width:490px;color:#000">Hi, I'm Jamie. I am here to answer your questions on GovTech Initiatives and Programmes<br>(E.g. SingPass, CorpPass, MyInfo). How may I assist you today?</div>
<div class="a msg b" style="left:670px;top:427px;color:#333">You asked:</div>
<div class="a msg" style="left:670px;top:445px;color:#333">how do I register my child for primary school</div>
<div class="a msg b" style="left:670px;top:463px;color:#1f3f77">Jamie says:</div>
<div class="a msg" style="left:670px;top:481px;width:490px;color:#222">I found an answer from <b>MOE</b>. Would you like me to display the answer for the following<br>question?</div>
<div class="a msg" style="left:674px;top:512px;color:#f00">What are the registration procedures for Primary One (P1)?</div>
<div class="a" style="left:662.200px;top:660.300px;width:508.900px;height:39.700px;background:#fff"></div>
<div class="a" style="left:666.500px;top:672px;width:1px;height:13px;background:#333"></div>
<span class="t" id="ch4" style="left:668px;top:671px;font-size:12px;color:#7a7a7a">Type your question ...</span>
<div class="a pill" style="left:1108px;top:669px;width:46px;height:22px;border-radius:8px"><span class="t" id="ch5" style="left:8px;top:3.500px;font-size:12px;color:#fff">Send</span></div>
<span class="t" id="ch6" style="left:667px;top:706px;font-size:12px;color:#fff">Print</span>
<svg class="a" style="left:694px;top:706px" width="11" height="11" viewBox="0 0 11 11"><path d="M2.500 0.500h6v3h-6zM0.500 3.500h10v4.500h-2v-1.500h-6v1.500h-2zM2.500 6.500h6v4h-6z" fill="#fff"/><path d="M3.500 8h4M3.500 9.500h4" stroke="#808080" stroke-width=".7"/></svg>
<span class="t" id="ch7" style="left:1026px;top:706px;font-size:12px;color:#fff;--sx:0.986">Powered by flexAnswer™</span>
</body>
</html>
